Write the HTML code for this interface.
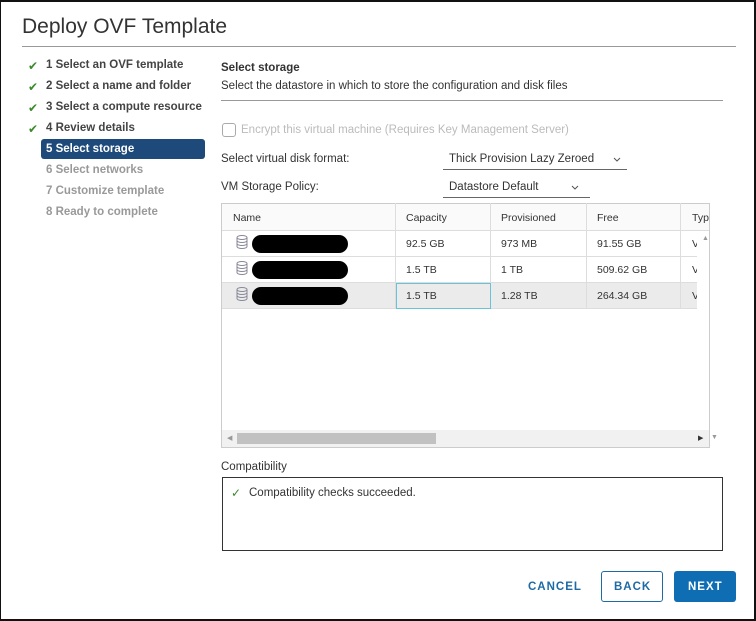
<!DOCTYPE html><html><head><style>
*{margin:0;padding:0;box-sizing:border-box}
body{width:756px;height:621px;background:#fff;font-family:"Liberation Sans",sans-serif;color:#333;position:relative;overflow:hidden}
.a{position:absolute;white-space:nowrap}
.frame{position:absolute;left:0;top:0;width:756px;height:621px;border:2px solid #111;border-left-width:1px}
.nav{font-size:11.5px;font-weight:bold;color:#444}
.nav.g{color:#999}
.chk{color:#3a8a2a;font-size:12px}
.t{font-size:11.5px;color:#333}
.c{font-size:10.5px;color:#333}
.vl{position:absolute;top:203px;width:1px;height:105px;background:#ddd}
.hl{position:absolute;left:222px;width:475px;height:1px;background:#ddd}
.redact{position:absolute;left:252px;width:96px;height:18px;background:#000;border-radius:9px}
.db{position:absolute;left:236px;width:12px;height:14px}
</style></head><body>
<div class="a" style="left:22px;top:15px;font-size:21px;color:#333">Deploy OVF Template</div>
<div class="a" style="left:22px;top:46px;width:714px;height:1px;background:#999"></div>

<div class="a chk" style="left:28px;top:59px">✔</div><div class="a nav" style="left:46px;top:59px">1 Select an OVF template</div>
<div class="a chk" style="left:28px;top:80px">✔</div><div class="a nav" style="left:46px;top:80px">2 Select a name and folder</div>
<div class="a chk" style="left:28px;top:101px">✔</div><div class="a nav" style="left:46px;top:101px">3 Select a compute resource</div>
<div class="a chk" style="left:28px;top:122px">✔</div><div class="a nav" style="left:46px;top:122px">4 Review details</div>
<div class="a" style="left:41px;top:139px;width:164px;height:20px;background:#1d4a7a;border-radius:3px"></div>
<div class="a nav" style="left:46px;top:143px;color:#fff">5 Select storage</div>
<div class="a nav g" style="left:46px;top:164px">6 Select networks</div>
<div class="a nav g" style="left:46px;top:185px">7 Customize template</div>
<div class="a nav g" style="left:46px;top:206px">8 Ready to complete</div>

<div class="a t" style="left:221px;top:62px;font-weight:bold">Select storage</div>
<div class="a t" style="left:221px;top:80px">Select the datastore in which to store the configuration and disk files</div>
<div class="a" style="left:221px;top:100px;width:502px;height:1px;background:#999"></div>

<div class="a" style="left:222px;top:123px;width:14px;height:14px;border:1px solid #aaa;border-radius:3px"></div>
<div class="a t" style="left:241px;top:124px;color:#bbb">Encrypt this virtual machine (Requires Key Management Server)</div>

<div class="a t" style="left:221px;top:153px">Select virtual disk format:</div>
<div class="a t" style="left:449px;top:153px">Thick Provision Lazy Zeroed</div>
<svg class="a" style="left:613px;top:157px" width="8" height="5" viewBox="0 0 8 5"><path d="M1 1l3 3 3-3" fill="none" stroke="#555" stroke-width="1"/></svg>
<div class="a" style="left:443px;top:169px;width:184px;height:1px;background:#666"></div>
<div class="a t" style="left:221px;top:181px">VM Storage Policy:</div>
<div class="a t" style="left:449px;top:181px">Datastore Default</div>
<svg class="a" style="left:571px;top:185px" width="8" height="5" viewBox="0 0 8 5"><path d="M1 1l3 3 3-3" fill="none" stroke="#555" stroke-width="1"/></svg>
<div class="a" style="left:443px;top:197px;width:147px;height:1px;background:#666"></div>

<div class="a" style="left:221px;top:203px;width:489px;height:245px;border:1px solid #ccc"></div>
<div class="a" style="left:222px;top:204px;width:487px;height:26px;background:#fafafa"></div>
<div class="a" style="left:222px;top:283px;width:475px;height:25px;background:#ebebeb"></div>
<div class="hl" style="top:230px;width:487px"></div><div class="hl" style="top:256px"></div><div class="hl" style="top:282px"></div><div class="hl" style="top:308px"></div>
<div class="vl" style="left:395px"></div><div class="vl" style="left:490px"></div><div class="vl" style="left:586px"></div><div class="vl" style="left:680px"></div>
<div class="a" style="left:396px;top:283px;width:95px;height:26px;border:1px solid #6bc1d8"></div>
<div class="a c" style="left:233px;top:212px">Name</div><div class="a c" style="left:406px;top:212px">Capacity</div><div class="a c" style="left:501px;top:212px">Provisioned</div><div class="a c" style="left:597px;top:212px">Free</div><div class="a c" style="left:692px;top:212px">Typ</div>

<div class="a c" style="left:406px;top:238px">92.5 GB</div><div class="a c" style="left:501px;top:238px">973 MB</div><div class="a c" style="left:597px;top:238px">91.55 GB</div><div class="a c" style="left:692px;top:238px">VN</div>
<div class="a c" style="left:406px;top:264px">1.5 TB</div><div class="a c" style="left:501px;top:264px">1 TB</div><div class="a c" style="left:597px;top:264px">509.62 GB</div><div class="a c" style="left:692px;top:264px">VN</div>
<div class="a c" style="left:406px;top:290px">1.5 TB</div><div class="a c" style="left:501px;top:290px">1.28 TB</div><div class="a c" style="left:597px;top:290px">264.34 GB</div><div class="a c" style="left:692px;top:290px">VN</div>
<div class="a" style="left:697px;top:231px;width:12px;height:199px;background:#fff"></div>
<div class="a" style="left:702px;top:235px;font-size:7px;color:#999">▲</div>
<div class="redact" style="top:235px"></div><div class="redact" style="top:261px"></div><div class="redact" style="top:287px"></div>
<svg class="db" style="top:235px" viewBox="0 0 12 14"><g fill="none" stroke="#889" stroke-width="1"><ellipse cx="6" cy="2.5" rx="5" ry="2"/><path d="M1 2.5v9c0 1.1 2.2 2 5 2s5-.9 5-2v-9M1 5.5c0 1.1 2.2 2 5 2s5-.9 5-2M1 8.5c0 1.1 2.2 2 5 2s5-.9 5-2"/></g></svg>
<svg class="db" style="top:261px" viewBox="0 0 12 14"><g fill="none" stroke="#889" stroke-width="1"><ellipse cx="6" cy="2.5" rx="5" ry="2"/><path d="M1 2.5v9c0 1.1 2.2 2 5 2s5-.9 5-2v-9M1 5.5c0 1.1 2.2 2 5 2s5-.9 5-2M1 8.5c0 1.1 2.2 2 5 2s5-.9 5-2"/></g></svg>
<svg class="db" style="top:287px" viewBox="0 0 12 14"><g fill="none" stroke="#889" stroke-width="1"><ellipse cx="6" cy="2.5" rx="5" ry="2"/><path d="M1 2.5v9c0 1.1 2.2 2 5 2s5-.9 5-2v-9M1 5.5c0 1.1 2.2 2 5 2s5-.9 5-2M1 8.5c0 1.1 2.2 2 5 2s5-.9 5-2"/></g></svg>
<div class="a" style="left:222px;top:430px;width:487px;height:17px;background:#f1f1f1"></div>
<div class="a" style="left:237px;top:433px;width:199px;height:11px;background:#c1c1c1"></div>
<div class="a" style="left:227px;top:434px;font-size:7px;color:#999">◀</div>
<div class="a" style="left:698px;top:434px;font-size:7px;color:#333">▶</div>
<div class="a" style="left:711px;top:434px;font-size:7px;color:#999">▼</div>

<div class="a t" style="left:221px;top:461px">Compatibility</div>
<div class="a" style="left:222px;top:477px;width:501px;height:74px;border:1px solid #333"></div>
<div class="a" style="left:231px;top:486px;font-size:12px;color:#3a8a2a">✓</div>
<div class="a t" style="left:249px;top:487px">Compatibility checks succeeded.</div>

<div class="a" style="left:528px;top:581px;font-size:11.5px;font-weight:bold;color:#1d6aa5;letter-spacing:1px">CANCEL</div>
<div class="a" style="left:601px;top:571px;width:62px;height:31px;border:1px solid #1d6aa5;border-radius:3px"></div>
<div class="a" style="left:614px;top:581px;font-size:11.5px;font-weight:bold;color:#1d6aa5;letter-spacing:1px">BACK</div>
<div class="a" style="left:674px;top:571px;width:62px;height:31px;background:#0f6db4;border-radius:3px"></div>
<div class="a" style="left:688px;top:581px;font-size:11.5px;font-weight:bold;color:#fff;letter-spacing:1px">NEXT</div>
<div class="frame"></div>
</body></html>
